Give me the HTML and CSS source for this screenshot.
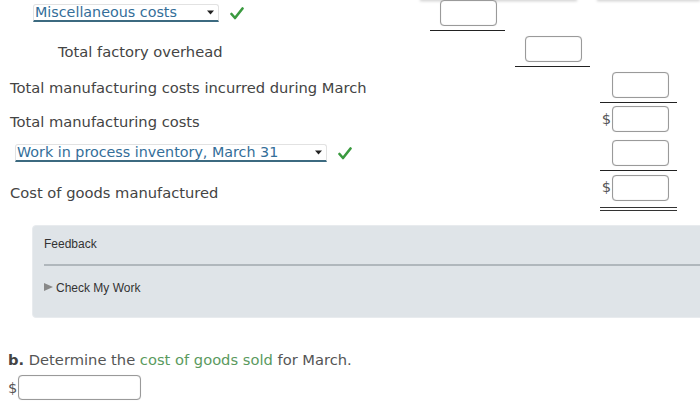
FILE: index.html
```html
<!DOCTYPE html>
<html>
<head>
<meta charset="utf-8">
<link rel="stylesheet" href="styles.css">
</head>
<body>
<div class="page">
  <div class="top-shade">
    <div class="shade shade-a"></div>
    <div class="shade shade-b"></div>
  </div>
  <div class="sheet">
    <div class="row">
      <div class="label indent-1">
        <span class="dropdown w-misc">Miscellaneous costs<svg class="caret" width="7" height="5" viewBox="0 0 7 5"><path d="M0 0.5 L7 0.5 L3.5 4.5 Z" fill="#222"/></svg></span>
        <svg class="check" width="14" height="13" viewBox="0 0 14 13"><path d="M1.5 7 L5 11 L12.5 1.5" fill="none" stroke="#3a9a3f" stroke-width="2.6" stroke-linecap="round" stroke-linejoin="round"/></svg>
      </div>
      <div class="cell line"><span class="box"></span></div>
      <div class="cell"></div>
      <div class="cell"></div>
    </div>
    <div class="row">
      <div class="label indent-2">Total factory overhead</div>
      <div class="cell"></div>
      <div class="cell line"><span class="box"></span></div>
      <div class="cell"></div>
    </div>
    <div class="row">
      <div class="label">Total manufacturing costs incurred during March</div>
      <div class="cell"></div>
      <div class="cell"></div>
      <div class="cell line"><span class="box"></span></div>
    </div>
    <div class="row tight">
      <div class="label">Total manufacturing costs</div>
      <div class="cell"></div>
      <div class="cell"></div>
      <div class="cell"><span class="dollar">$</span><span class="box"></span></div>
    </div>
    <div class="row">
      <div class="label indent-s">
        <span class="dropdown w-wip">Work in process inventory, March 31<svg class="caret" width="7" height="5" viewBox="0 0 7 5"><path d="M0 0.5 L7 0.5 L3.5 4.5 Z" fill="#222"/></svg></span>
        <svg class="check" width="14" height="13" viewBox="0 0 14 13"><path d="M1.5 7 L5 11 L12.5 1.5" fill="none" stroke="#3a9a3f" stroke-width="2.6" stroke-linecap="round" stroke-linejoin="round"/></svg>
      </div>
      <div class="cell"></div>
      <div class="cell"></div>
      <div class="cell line"><span class="box"></span></div>
    </div>
    <div class="row last">
      <div class="label">Cost of goods manufactured</div>
      <div class="cell"></div>
      <div class="cell"></div>
      <div class="cell double"><span class="dollar">$</span><span class="box"></span></div>
    </div>
  </div>

  <div class="feedback">
    <div class="fb-title">Feedback</div>
    <div class="fb-check"><span class="tri"></span>Check My Work</div>
  </div>

  <p class="question"><b>b.</b> Determine the <span class="term">cost of goods sold</span> for March.</p>
  <div class="answer"><span class="dollar">$</span><span class="box wide"></span></div>
</div>
</body>
</html>
```
FILE: styles.css
```css
html, body {
  margin: 0;
  padding: 0;
  background: #fff;
  overflow: hidden;
}
body {
  width: 700px;
  height: 417px;
  font-family: "DejaVu Sans", Verdana, sans-serif;
  font-size: 14.7px;
  color: #444;
}
.page {
  position: relative;
}
.top-shade {
  display: flex;
  height: 0;
  margin-left: 420px;
  gap: 20px;
}
.shade {
  height: 2px;
  margin-top: -2px;
  background: #ddd;
  box-shadow: 0 1px 3px rgba(0,0,0,0.25);
}
.shade-a { width: 157px; }
.shade-b { flex: 1; }
.sheet {
  margin-top: -5px;
}
.row {
  display: grid;
  grid-template-columns: 420px 75px 75px 77px;
  column-gap: 10px;
  height: 36px;
}
.row.tight { height: 32px; }
.row.last { height: 40px; }
.label {
  display: flex;
  align-items: center;
  padding-left: 10px;
  padding-top: 4px;
  white-space: nowrap;
}
.indent-1 { padding-left: 33px; padding-top: 0; }
.indent-2 { padding-left: 58px; }
.indent-s { padding-left: 15px; padding-top: 0; }
.row.last .label { padding-top: 2px; }
.cell {
  display: flex;
  align-items: center;
  justify-content: flex-end;
  padding-right: 8px;
  border-bottom: 1px solid transparent;
  box-sizing: border-box;
}
.cell.line { border-bottom-color: #222; }
.cell.double {
  border-bottom: 4px double #333;
  align-items: flex-start;
  padding-top: 4px;
}
.box {
  display: inline-block;
  width: 57px;
  height: 26px;
  box-sizing: border-box;
  border: 1px solid #9a9a9a;
  border-radius: 4px;
  background: #fff;
  box-shadow: inset 0 0 1px rgba(0,0,0,0.3), 0 0 1px rgba(0,0,0,0.15);
}
.dollar {
  color: #555;
  font-size: 14.7px;
  margin-right: 1px;
}
.cell.double .dollar { margin-top: 3px; }
.dropdown {
  display: inline-flex;
  align-items: center;
  justify-content: space-between;
  height: 18px;
  box-sizing: border-box;
  padding-left: 1px;
  padding-right: 4px;
  border: 1px solid #e2e2e2;
  border-bottom: 2px solid #3c6a80;
  border-radius: 3px 3px 0 0;
  color: #336e99;
  font-size: 14.3px;
  line-height: 15px;
}
.w-misc { width: 186px; }
.w-wip { width: 312px; }
.check { margin-left: 11px; }
.feedback {
  margin: 14px -12px 0 32px;
  height: 93px;
  background: #dfe4e8;
  border-radius: 4px;
  border: 1px solid #e8ebee;
  box-sizing: border-box;
  padding: 0 0 0 11px;
  font-family: "Liberation Sans", Arial, sans-serif;
  font-size: 12px;
  color: #333;
}
.fb-title {
  height: 40px;
  line-height: 36px;
  border-bottom: 2px solid #b0b7bc;
  box-sizing: border-box;
}
.fb-check {
  display: flex;
  align-items: center;
  height: 44px;
}
.tri {
  width: 0;
  height: 0;
  border-top: 4px solid transparent;
  border-bottom: 4px solid transparent;
  border-left: 9px solid #888;
  margin-right: 3px;
  margin-top: -2px;
}
.question {
  margin: 32px 0 0 8px;
  line-height: 20px;
  color: #555;
}
.question b { color: #444; }
.term { color: #5a9a5e; }
.answer {
  display: flex;
  align-items: center;
  margin: 5px 0 0 8px;
}
.box.wide {
  width: 123px;
  height: 25px;
}
```
